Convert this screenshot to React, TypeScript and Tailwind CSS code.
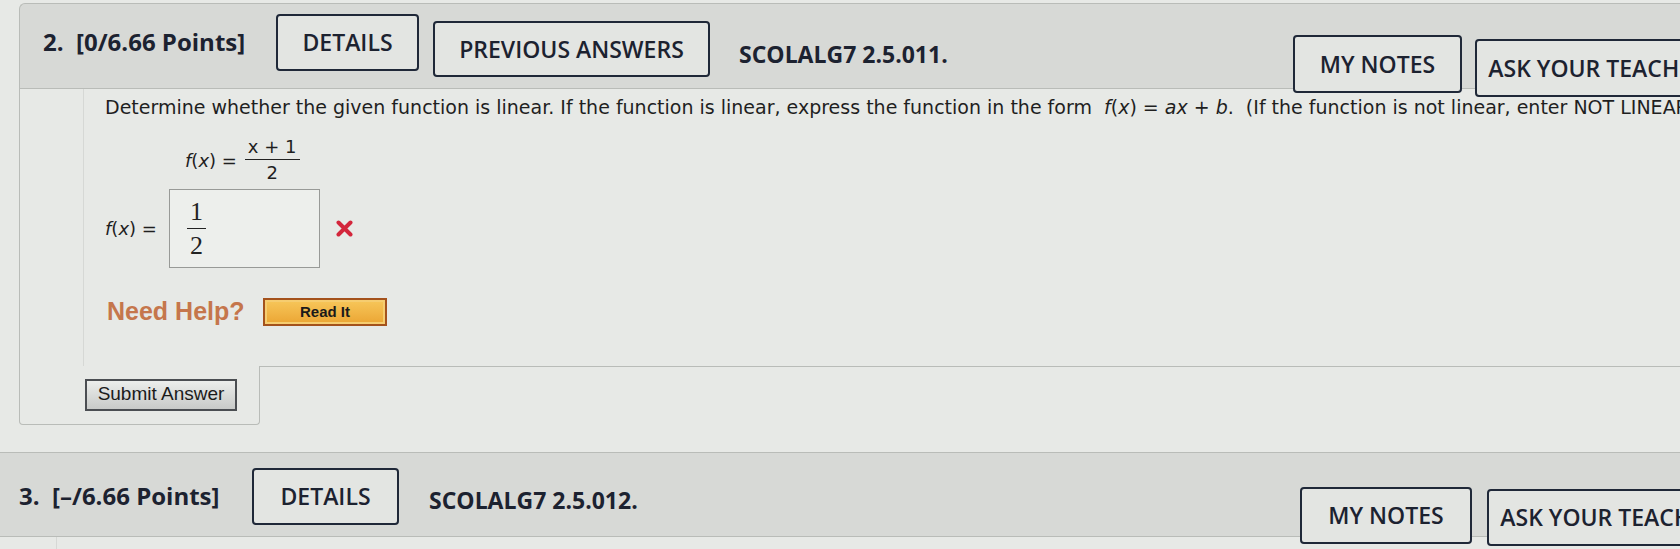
import React from "react";

const hdr = "font-['Open_Sans',sans-serif] text-[#1c2230]";
const outlineBtn =
    "flex items-center justify-center border-2 border-[#1f2838] rounded-[4px] bg-[#e3e5e2] font-semibold text-[23px] text-[#1c2230] shrink-0 whitespace-nowrap";
const body = "font-['DejaVu_Sans',sans-serif] text-[#1f1f1f]";

function Fraction({ top, bottom, className }: { top: string; bottom: string; className?: string }) {
    return (
        <span className={"inline-flex flex-col items-center align-middle leading-none " + (className ?? "")}>
            <span className="px-[3px] pb-[3px]">{top}</span>
            <span className="w-full border-t border-[#222]" />
            <span className="px-[3px] pt-[4px]">{bottom}</span>
        </span>
    );
}

function Fx() {
    return (
        <span>
            <i>f</i>(<i>x</i>) =
        </span>
    );
}

export default function App() {
    return (
        <div className="w-[1680px] h-[549px] overflow-hidden bg-[#e7e9e6] pt-[3px]">
            {/* question 2 */}
            <div className="ml-[19px]">
                <div
                    className={
                        "h-[86px] bg-[#d7d9d6] border border-r-0 border-[#b9bcb8] rounded-tl-[6px] flex items-start pl-[23px] whitespace-nowrap " +
                        hdr
                    }
                >
                    <span className="text-[24px] font-bold w-[233px] shrink-0 mt-[21px] leading-[33px]">2.&nbsp; [0/6.66 Points]</span>
                    <div className={outlineBtn + " w-[143px] h-[57px] mt-[10px]"}>DETAILS</div>
                    <div className={outlineBtn + " w-[277px] h-[56px] mt-[17px] ml-[14px]"}>PREVIOUS ANSWERS</div>
                    <span className="text-[23px] font-bold ml-[29px] mt-[34px] leading-[32px]">SCOLALG7 2.5.011.</span>
                    <div className="flex items-start gap-[13px] ml-auto mr-[-40px] shrink-0">
                        <div className={outlineBtn + " w-[169px] h-[58px] mt-[31px]"}>MY NOTES</div>
                        <div className={outlineBtn + " w-[245px] h-[58px] mt-[35px]"}>ASK YOUR TEACHER</div>
                    </div>
                </div>

                <div className="flex border-l border-[#b9bcb8]">
                    <div className="w-[63px] shrink-0" />
                    <div className="flex-1 border-l border-[#d6d8d5] pl-[21px] pt-[5px] pb-[35px]">
                        <p className={body + " text-[19px] whitespace-nowrap leading-[26px]"}>
                            Determine whether the given function is linear. If the function is linear, express the function in the form&nbsp;{" "}
                            <i>f</i>(<i>x</i>) = <i>ax</i> + <i>b</i>.&nbsp; (If the function is not linear, enter NOT LINEAR.)
                        </p>
                        <div className={body + " text-[18px] ml-[80px] mt-[18px] flex items-center gap-[8px]"}>
                            <Fx />
                            <Fraction top="x + 1" bottom="2" className="text-[18px]" />
                        </div>

                        <div className="flex items-center mt-[7px]">
                            <span className={body + " text-[18px] w-[64px] shrink-0"}>
                                <Fx />
                            </span>
                            <div className="w-[151px] h-[79px] border border-[#989a97] bg-[#edefec] flex items-center pl-[17px]">
                                <Fraction top="1" bottom="2" className="font-['Liberation_Serif',serif] text-[26px] text-[#222]" />
                            </div>
                            <svg width="17" height="17" viewBox="0 0 17 17" className="ml-[16px]">
                                <path d="M2.5 2.5 L14.5 14.5 M14.5 2.5 L2.5 14.5" stroke="#d3263b" strokeWidth="4" strokeLinecap="round" />
                            </svg>
                        </div>

                        <div className="flex items-center mt-[25px] ml-[2px]">
                            <span className="font-['Liberation_Sans',sans-serif] font-bold text-[25px] text-[#c5764c] w-[156px] shrink-0">
                                Need Help?
                            </span>
                            <div className="w-[124px] h-[28px] border-2 border-[#a4521c] bg-gradient-to-b from-[#f7c75a] to-[#eba532] shadow-[inset_0_0_0_2px_#f6cd70] flex items-center justify-center font-['Liberation_Sans',sans-serif] font-bold text-[15px] text-[#1a1a1a]">
                                Read It
                            </div>
                        </div>
                    </div>
                </div>

                <div className="flex">
                    <div className="w-[241px] h-[59px] shrink-0 border border-t-0 border-[#b9bcb8] rounded-b-[4px] pl-[65px] pt-[13px]">
                        <div className="w-[152px] h-[32px] border-2 border-[#4b4e52] bg-gradient-to-b from-[#eceeec] to-[#c8cac8] flex items-center justify-center font-['Liberation_Sans',sans-serif] text-[19px] text-[#1b1b1b]">
                            Submit Answer
                        </div>
                    </div>
                    <div className="flex-1 border-t border-[#b9bcb8]" />
                </div>
            </div>

            {/* question 3 */}
            <div className="mt-[27px]">
                <div className={"h-[85px] bg-[#d7d9d6] border-y border-[#b9bcb8] flex items-start pl-[19px] whitespace-nowrap " + hdr}>
                    <span className="text-[24px] font-bold w-[233px] shrink-0 mt-[26px] leading-[33px]">3.&nbsp; [–/6.66 Points]</span>
                    <div className={outlineBtn + " w-[147px] h-[57px] mt-[15px]"}>DETAILS</div>
                    <span className="text-[23px] font-bold ml-[30px] mt-[31px] leading-[32px]">SCOLALG7 2.5.012.</span>
                    <div className="flex items-start gap-[15px] ml-auto mr-[-52px] shrink-0">
                        <div className={outlineBtn + " w-[172px] h-[57px] mt-[34px]"}>MY NOTES</div>
                        <div className={outlineBtn + " w-[245px] h-[57px] mt-[36px]"}>ASK YOUR TEACHER</div>
                    </div>
                </div>
                <div className="flex h-[20px]">
                    <div className="w-[56px] shrink-0" />
                    <div className="flex-1 border-l border-[#d6d8d5]" />
                </div>
            </div>
        </div>
    );
}
